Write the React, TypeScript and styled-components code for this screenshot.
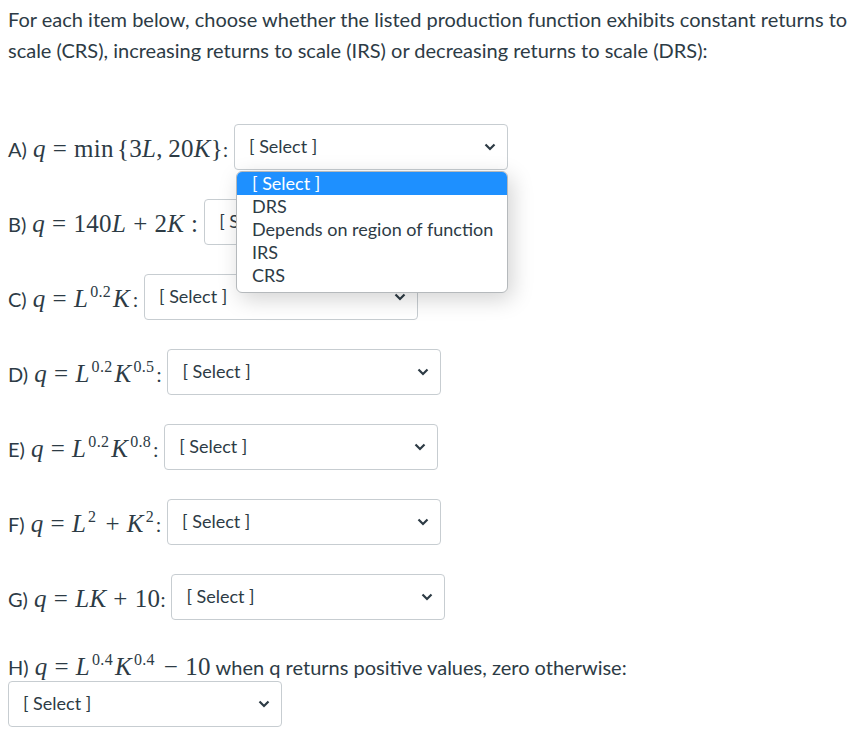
import styled, { createGlobalStyle } from "styled-components";

const Global = createGlobalStyle`
  body {
    margin: 0;
    background: #fff;
    font-family: Lato, "Liberation Sans", sans-serif;
    color: #2d3b45;
  }
`;

const Page = styled.div`
  padding: 4px 8px 0 8px;
  font-size: 20px;
`;

const Intro = styled.p`
  margin: 0 0 58px 0;
  line-height: 31px;
`;

const Row = styled.div<{ $raised?: boolean }>`
  display: flex;
  align-items: center;
  height: 46px;
  margin-bottom: 29px;
  position: relative;
  z-index: ${(p) => (p.$raised ? 2 : 1)};
`;

const Stacked = styled.div`
  display: flex;
  flex-direction: column;
  gap: 0;
`;

const Label = styled.span`
  white-space: nowrap;
  margin-right: 6px;
  padding-top: 4px;
`;

const Math = styled.span`
  font-family: "Liberation Serif", "DejaVu Serif", serif;
  font-size: 25px;
  margin-left: 6px;
  letter-spacing: 0.3px;
`;

const V = styled.i<{ $tail?: number }>`
  font-style: italic;
  margin-right: ${(p) => p.$tail ?? 0}px;
`;

const Op = styled.span`
  margin: 0 7px;
`;

const Brace = styled.span`
  margin: 0 0 0 3px;
`;

const Sup = styled.sup`
  font-size: 16px;
  vertical-align: 10px;
  line-height: 0;
  margin-left: 2px;
  margin-right: 2px;
`;

const SelectBox = styled.div`
  position: relative;
  box-sizing: border-box;
  width: 274px;
  height: 46px;
  border: 1px solid #c7cdd1;
  border-radius: 4px;
  background: #fff;
  display: flex;
  align-items: center;
  justify-content: space-between;
  padding: 0 11px 0 14px;
  font-size: 18px;
  color: #2d3b45;
`;

const Placeholder = styled.span`
  margin-top: -2px;
`;

const Menu = styled.ul`
  position: absolute;
  top: 46px;
  left: 1px;
  width: 272px;
  margin: 0;
  padding: 0 0 5px 0;
  list-style: none;
  background: #fff;
  border: 1px solid #b5b9bc;
  border-radius: 6px;
  box-shadow: 4px 6px 22px rgba(0, 0, 0, 0.18);
  overflow: hidden;
  box-sizing: border-box;
`;

const Option = styled.li<{ $active?: boolean }>`
  height: 23px;
  line-height: 23px;
  padding-left: 15px;
  font-size: 18px;
  background: ${(p) => (p.$active ? "#1e90ff" : "transparent")};
  color: ${(p) => (p.$active ? "#fff" : "#2d3b45")};
`;

const Chevron = () => (
  <svg width="12" height="8" viewBox="0 0 12 8">
    <path d="M1.5 1.5 L6 6 L10.5 1.5" fill="none" stroke="#2d3b45" strokeWidth="2.2" />
  </svg>
);

const Select = ({ open }: { open?: boolean }) => (
  <SelectBox>
    <Placeholder>[ Select ]</Placeholder>
    <Chevron />
    {open && (
      <Menu>
        <Option $active>[ Select ]</Option>
        <Option>DRS</Option>
        <Option>Depends on region of function</Option>
        <Option>IRS</Option>
        <Option>CRS</Option>
      </Menu>
    )}
  </SelectBox>
);

export default function App() {
  return (
    <>
      <Global />
      <Page>
        <Intro>
          For each item below, choose whether the listed production function exhibits constant returns to
          scale (CRS), increasing returns to scale (IRS) or decreasing returns to scale (DRS):
        </Intro>

        <Row $raised>
          <Label>
            A)
            <Math>
              <V>q</V>
              <Op>=</Op>min<Brace>{"{"}</Brace>3<V>L</V>,{"\u2009"}20<V>K</V>
              {"}"}
            </Math>
            :
          </Label>
          <Select open />
        </Row>

        <Row>
          <Label>
            B)
            <Math>
              <V>q</V>
              <Op>=</Op>140<V>L</V>
              <Op>+</Op>2<V>K</V> :
            </Math>
          </Label>
          <Select />
        </Row>

        <Row>
          <Label>
            C)
            <Math>
              <V>q</V>
              <Op>=</Op>
              <V>L</V>
              <Sup>0.2</Sup>
              <V $tail={3}>K</V>
            </Math>
            :
          </Label>
          <Select />
        </Row>

        <Row>
          <Label>
            D)
            <Math>
              <V>q</V>
              <Op>=</Op>
              <V>L</V>
              <Sup>0.2</Sup>
              <V>K</V>
              <Sup>0.5</Sup>
            </Math>
            :
          </Label>
          <Select />
        </Row>

        <Row>
          <Label>
            E)
            <Math>
              <V>q</V>
              <Op>=</Op>
              <V>L</V>
              <Sup>0.2</Sup>
              <V>K</V>
              <Sup>0.8</Sup>
            </Math>
            :
          </Label>
          <Select />
        </Row>

        <Row>
          <Label>
            F)
            <Math>
              <V>q</V>
              <Op>=</Op>
              <V>L</V>
              <Sup>2</Sup>
              <Op>+</Op>
              <V>K</V>
              <Sup>2</Sup>
            </Math>
            :
          </Label>
          <Select />
        </Row>

        <Row>
          <Label>
            G)
            <Math>
              <V>q</V>
              <Op>=</Op>
              <V>LK</V>
              <Op>+</Op>10
            </Math>
            :
          </Label>
          <Select />
        </Row>

        <Stacked>
          <Label>
            H)
            <Math>
              <V>q</V>
              <Op>=</Op>
              <V>L</V>
              <Sup>0.4</Sup>
              <V>K</V>
              <Sup>0.4</Sup>
              <Op>−</Op>10
            </Math>{" "}
            when q returns positive values, zero otherwise:
          </Label>
          <Select />
        </Stacked>
      </Page>
    </>
  );
}
